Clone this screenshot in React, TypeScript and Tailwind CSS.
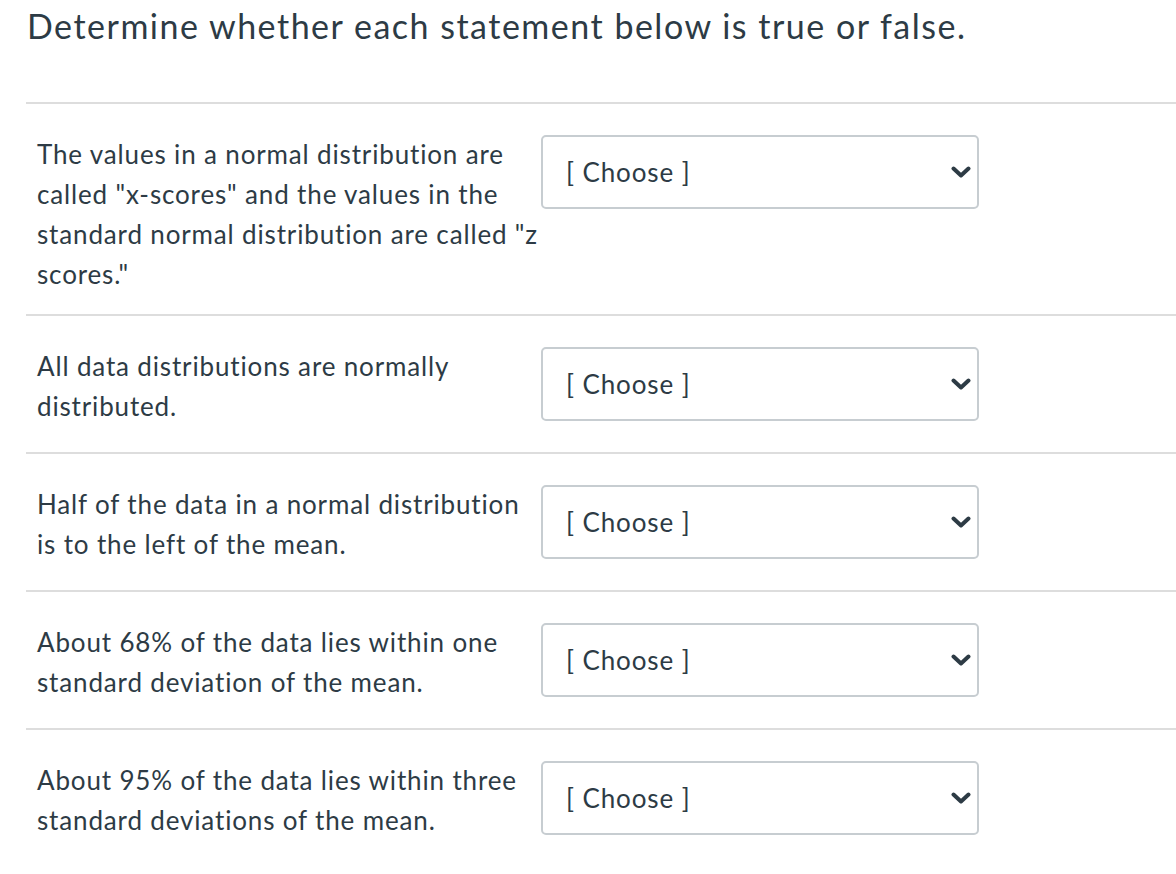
import React from 'react';

const statements = [
  'The values in a normal distribution are called "x-scores" and the values in the standard normal distribution are called "z scores."',
  'All data distributions are normally distributed.',
  'Half of the data in a normal distribution is to the left of the mean.',
  'About 68% of the data lies within one standard deviation of the mean.',
  'About 95% of the data lies within three standard deviations of the mean.',
];

const ChooseSelect = () => (
  <div className="mt-[1px] mb-[11px] flex h-[74px] w-[438px] shrink-0 items-center justify-between rounded-[5px] border-2 border-[#c7cdd1] bg-white pl-[23px] pr-[7px]">
    <span className="text-[26px] leading-none tracking-[0.9px] text-[#2d3b45]">[ Choose ]</span>
    <svg width="20" height="12" viewBox="0 0 20 12" className="mr-[-1px]">
      <path d="M2.5 2.5 L10 9.5 L17.5 2.5" fill="none" stroke="#2d3b45" strokeWidth="4" strokeLinecap="round" strokeLinejoin="round" />
    </svg>
  </div>
);

export default function App() {
  return (
    <div className="min-h-[874px] bg-white text-[#2d3b45]" style={{ fontFamily: 'Lato, "Noto Sans", sans-serif' }}>
      <h1 className="pl-[27px] pt-[4px] text-[34px] leading-[44px] font-normal tracking-[1.5px]">
        Determine whether each statement below is true or false.
      </h1>
      <div className="ml-[26px] mt-[54px]">
        {statements.map((s, i) => (
          <div key={i} className="flex border-t-2 border-[#dddddd] pb-[20px] pl-[11px] pt-[30px]">
            <p className="w-[504px] shrink-0 text-[26px] leading-[40px] tracking-[0.85px]">{s}</p>
            <ChooseSelect />
          </div>
        ))}
      </div>
    </div>
  );
}
